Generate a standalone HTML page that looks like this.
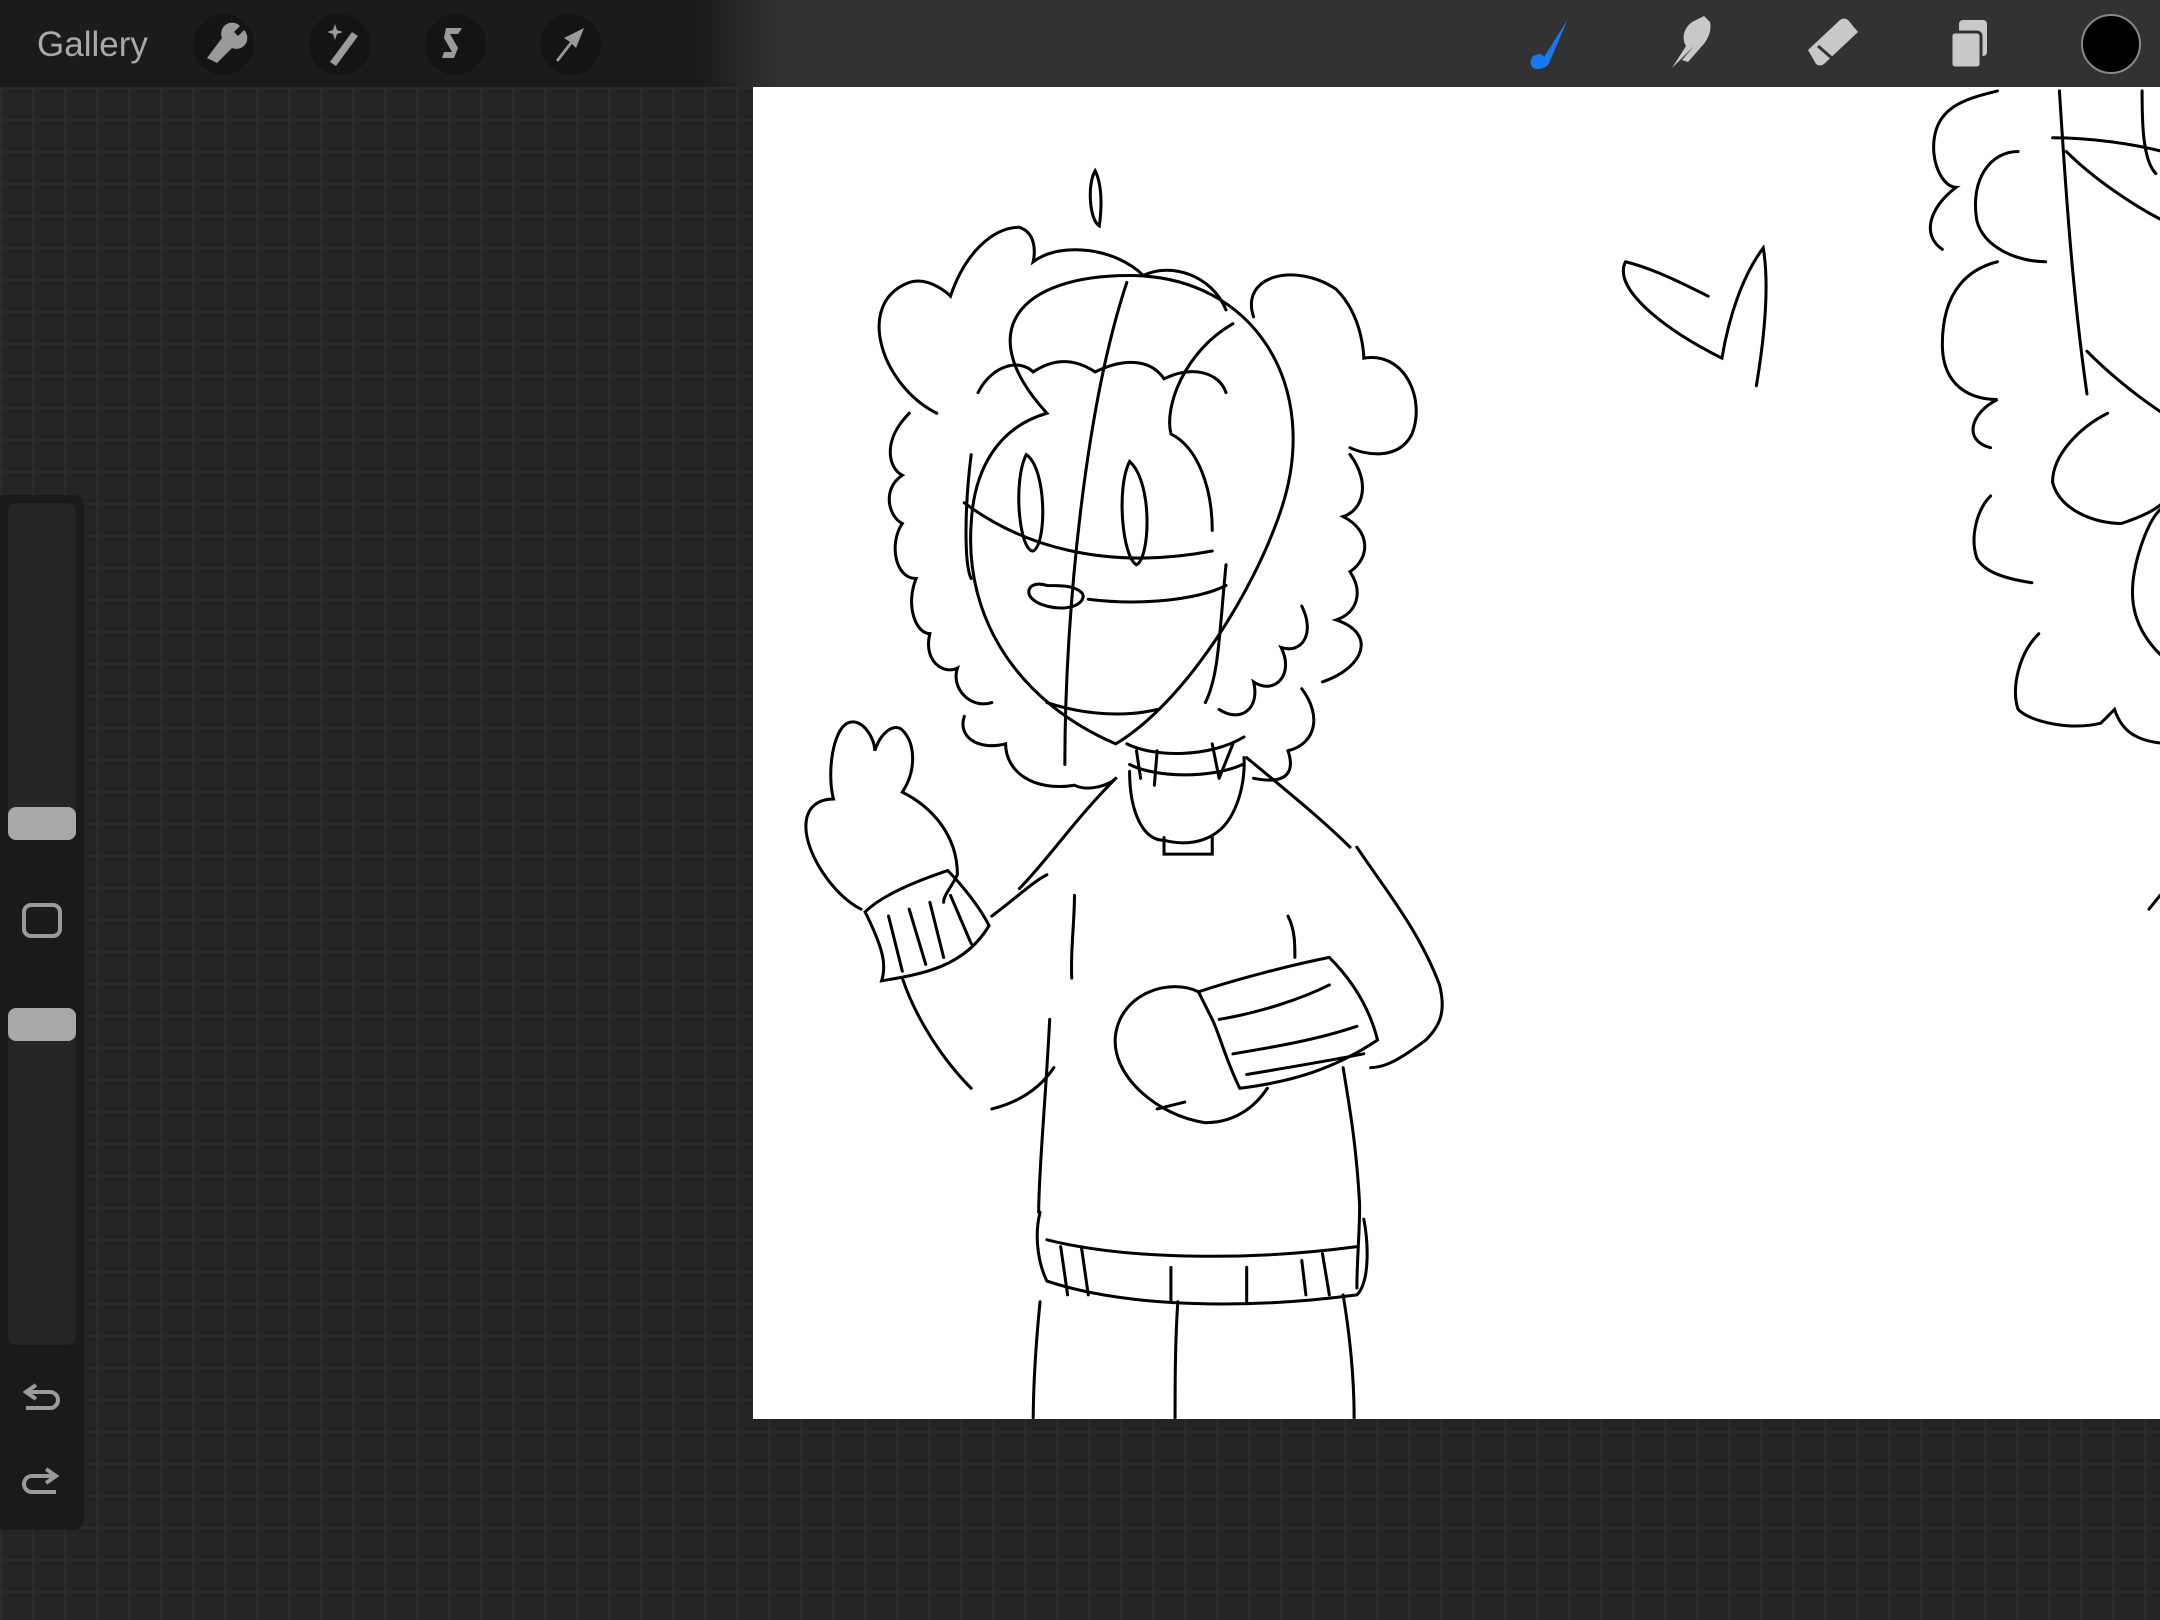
<!DOCTYPE html>
<html><head><meta charset="utf-8"><style>
html,body{margin:0;padding:0}
body{width:2160px;height:1620px;position:relative;overflow:hidden;background:#242424;
background-image:linear-gradient(#2b2b2b 2px,transparent 2px),linear-gradient(90deg,#2b2b2b 2px,transparent 2px);
background-size:32px 32px;background-position:0 87px;font-family:"Liberation Sans",sans-serif}
.top{position:absolute;left:0;top:0;width:2160px;height:87px;background:linear-gradient(90deg,#1b1b1b 0,#1b1b1b 700px,#313131 780px,#323232 100%)}
.gal{position:absolute;left:37px;top:25px;font-size:35px;color:#a9a9a9}
.c{position:absolute;top:14px;width:61px;height:61px;border-radius:50%;background:#141414}
.canvas{position:absolute;left:753px;top:87px;width:1407px;height:1332px;background:#fff}
.side{position:absolute;left:0;top:495px;width:84px;height:1035px;background:#1a1a1a;border-radius:0 10px 10px 0}
.track{position:absolute;left:8px;width:68px;background:#252525;border-radius:8px}
.h{position:absolute;left:8px;width:68px;height:33px;background:#a8a8a8;border-radius:8px}
svg{position:absolute;left:0;top:0}
</style></head><body>
<div class="canvas"></div>
<div class="top">
<div class="gal">Gallery</div>
<div class="c" style="left:193px"></div><div class="c" style="left:309px"></div><div class="c" style="left:425px"></div><div class="c" style="left:540px"></div>
</div>
<div class="side">
<div class="track" style="top:8px;height:335px"></div>
<div class="track" style="top:520px;height:330px"></div>
<div class="h" style="top:312px"></div>
<div class="h" style="top:513px"></div>
</div>
<svg width="2160" height="1620" viewBox="0 0 2160 1620">
<g fill="#9a9a9a">
<path d="M207 58 L222 38 a11 11 0 0 1 18 -12 l-6 6 4 4 6 -6 a11 11 0 0 1 -12 18 L217 63 z"/>
<path d="M330 62 l22 -30 6 4 -22 30 z"/><path d="M333 30 l2 -6 2 6 6 2 -6 2 -2 6 -2 -6 -6 -2z"/>
<path d="M446 28 h16 l-4 6 h-8 l8 14 -4 10 h-12 l2 -6 h8 l-8 -14z"/>
<path d="M556 60 l14 -18 -6 -4 20 -10 -8 20 -4 -4 -14 18z"/>
</g>
<path d="M1532 67 c-6 -12 10 -16 12 -10 l24 -38 -18 42 c-2 8 -14 10 -18 6z" fill="#1a78f0"/>
<path d="M1672 68 l14 -22 c-6 -10 0 -22 10 -26 l8 -4 6 6 c2 8 -2 18 -8 24 l-14 16 -6 -2 12 -14z" fill="#c8c8c8"/>
<path d="M1808 50 l32 -30 a6 6 0 0 1 8 0 l10 12 -34 32 a6 6 0 0 1 -8 0z" fill="#c8c8c8"/>
<line x1="1818" y1="46" x2="1834" y2="60" stroke="#323232" stroke-width="3"/>
<rect x="1959" y="20" width="28" height="36" rx="4" fill="#c8c8c8"/>
<rect x="1951" y="32" width="30" height="36" rx="4" fill="#c8c8c8" stroke="#323232" stroke-width="3"/>
<circle cx="2111" cy="44" r="29" fill="#000" stroke="#888" stroke-width="2"/>
<rect x="24" y="905" width="36" height="31" rx="7" fill="none" stroke="#9a9a9a" stroke-width="4"/>
<path d="M28 1392 h22 a8 8 0 0 1 0 16 h-24 M36 1385 l-10 7 10 7" fill="none" stroke="#9a9a9a" stroke-width="4"/>
<path d="M54 1476 h-22 a8 8 0 0 0 0 16 h24 M46 1469 l10 7 -10 7" fill="none" stroke="#9a9a9a" stroke-width="4"/>
</svg>
<svg width="2160" height="1620" viewBox="0 0 1568 1176" preserveAspectRatio="none">
<defs><clipPath id="cl"><rect x="547" y="64" width="1021" height="966"/></clipPath></defs>
<g clip-path="url(#cl)" fill="none" stroke="#000" stroke-width="2.2" stroke-linecap="round">
<path d="M795 124 c-6 10 -4 36 3 40 c2 -14 2 -30 -3 -40z"/>
<path d="M680 300 c-40 -20 -60 -80 -20 -95 c15 -5 30 10 30 10 c10 -30 30 -50 50 -50 c15 5 10 25 10 25 c20 -15 60 -10 80 10 c20 -10 50 0 60 25"/>
<path d="M910 230 c-10 -30 30 -40 60 -20 c20 20 20 50 20 50 c30 -5 45 30 35 55 c-10 20 -35 15 -45 10"/>
<path d="M660 300 c-20 20 -15 40 -5 45 c-15 10 -10 30 0 35 c-10 15 -5 40 10 40 c-8 20 0 40 10 40 c-5 20 10 30 20 25 c-5 15 10 30 25 25"/>
<path d="M980 330 c15 20 10 40 -5 45 c20 10 20 30 5 40 c10 15 5 30 -10 35 c30 10 20 35 -10 45"/>
<path d="M945 440 c10 20 0 35 -15 30 c10 20 -5 35 -20 25 c5 20 -10 30 -25 20"/>
<path d="M700 520 c-5 15 10 25 30 20 c0 20 20 35 50 30 c10 5 25 0 30 -5"/>
<path d="M945 500 c15 20 10 40 -10 45 c5 15 0 25 -25 20"/>
<path d="M760 300 c-55 -60 -20 -100 60 -100 c90 0 140 80 110 170 c-20 60 -70 140 -120 170 c-70 -30 -110 -90 -105 -160 c2 -40 20 -70 55 -80z"/>
<path d="M818 205 c-30 90 -45 240 -45 350"/>
<path d="M895 235 c-35 20 -50 60 -45 80 c20 10 30 40 30 70"/>
<path d="M710 285 c10 -20 30 -25 40 -15 c15 -10 30 -10 45 0 c20 -10 40 -10 50 5 c20 -10 40 -5 45 10"/>
<path d="M705 330 c-5 40 -5 80 0 90"/>
<path d="M745 330 c-10 20 -5 70 5 70 c10 -5 10 -60 -5 -70z"/>
<path d="M820 335 c-10 20 -5 70 5 75 c10 -5 12 -60 -5 -75z"/>
<path d="M700 365 c40 30 100 50 180 35"/>
<path d="M760 425 c-15 -5 -20 10 0 15 c20 5 30 -5 25 -10 c-5 -5 -15 -5 -25 -5z"/>
<path d="M790 435 c40 5 80 0 100 -10"/>
<path d="M890 410 c-5 50 -5 80 -15 100"/>
<path d="M760 510 c30 10 60 10 80 5"/>
<path d="M818 540 c20 10 60 10 85 -5 M820 555 c20 10 60 10 82 0 M825 545 l3 20 M840 545 l-2 25 M880 540 l5 25 M895 540 l-10 25"/>
<path d="M820 560 c0 30 10 50 25 50 c20 5 40 0 50 -20 c10 -20 8 -40 8 -40"/>
<path d="M845 608 v12 h35 v-12"/>
<path d="M810 565 c-30 30 -50 60 -70 80 M720 665 c20 -15 30 -25 40 -30"/>
<path d="M905 550 c30 25 55 45 75 65 M985 615 c20 30 45 60 60 100 c5 20 0 30 -10 40 c-20 15 -30 20 -40 20"/>
<path d="M780 650 c0 20 -3 40 -2 60 M935 665 c5 10 5 20 5 30"/>
<path d="M625 660 c-20 -10 -40 -40 -40 -60 c0 -15 10 -20 20 -20 c-5 -20 0 -50 10 -55 c10 -5 20 10 20 20 c5 -15 15 -20 20 -15 c10 10 10 30 0 45 c20 10 40 30 40 60 c-5 10 -10 15 -10 20"/>
<path d="M628 662 c15 30 15 40 12 50 c30 -5 60 -10 78 -40 c-10 -20 -30 -40 -30 -40 c-30 10 -50 20 -60 30z M645 665 l10 40 M660 660 l12 40 M675 655 l10 40 M690 650 l15 35"/>
<path d="M655 710 c10 30 30 60 50 80 M720 805 c20 -5 35 -15 45 -30 M762 740 c-3 60 -8 110 -8 140"/>
<path d="M870 720 c-20 -10 -55 0 -60 30 c-5 30 30 60 65 65 c20 0 35 -10 45 -25"/>
<path d="M870 720 c30 -10 70 -20 95 -25 c20 20 30 40 35 60 c-30 20 -60 30 -100 35 c-10 -20 -15 -40 -20 -50z M885 740 c30 -5 60 -15 80 -25 M895 765 c30 -5 60 -10 90 -20 M905 780 c30 -5 60 -10 85 -15"/>
<path d="M840 805 l20 -5 M975 775 c5 30 10 60 12 100 c0 20 -2 40 -2 60"/>
<path d="M755 880 c-5 20 0 40 5 50 c60 20 150 20 225 10 c10 -10 8 -40 5 -55 M760 900 c60 15 150 15 225 5 M770 905 l5 35 M785 905 l5 35 M850 920 v25 M905 920 v25 M945 915 l3 25 M960 910 l5 30"/>
<path d="M755 945 c-3 30 -5 60 -5 90 M855 945 c-2 30 -2 60 -2 90 M975 940 c5 30 8 60 8 90"/>
<path d="M1180 190 c-10 20 30 50 70 70 c5 -30 15 -60 30 -80 c5 30 0 70 -5 100 M1180 190 c20 5 40 15 60 25"/>
<path d="M1450 66 c-20 5 -40 10 -45 30 c-5 20 5 40 15 40 c-20 15 -25 35 -10 45 M1465 110 c-20 0 -35 20 -30 50 c5 20 30 30 50 30 M1450 190 c-20 5 -40 20 -40 60 c0 30 20 40 40 40 c-20 10 -25 30 -5 35 M1445 360 c-10 10 -15 30 -10 45 c5 10 20 15 40 18 M1480 460 c-15 15 -20 40 -15 55 c10 10 40 15 60 10 l10 -10 c5 15 15 25 45 25"/>
<path d="M1495 66 c5 80 10 150 20 220 M1490 100 c30 0 60 5 80 10 M1500 110 c20 20 50 40 70 50 M1515 255 c20 20 40 35 55 45 M1555 66 c0 20 0 50 10 60"/>
<path d="M1530 300 c-20 10 -40 30 -40 50 c5 20 30 30 50 30 c15 -5 25 -10 30 -15 M1568 370 c-10 10 -20 40 -20 60 c0 20 10 35 20 45 M1560 660 l8 -10"/>
</g>
</svg>
</body></html>
